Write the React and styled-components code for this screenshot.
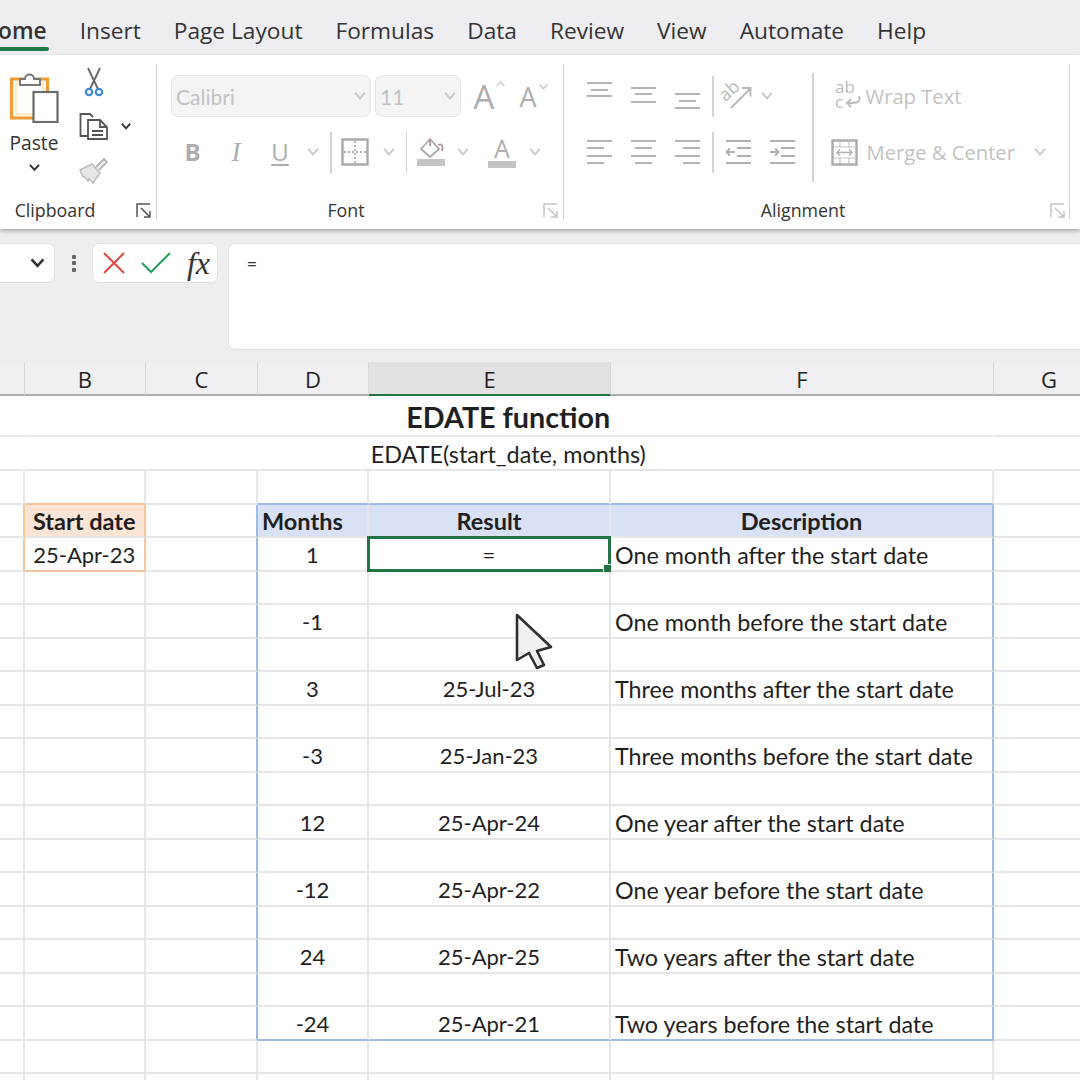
import styled, { createGlobalStyle } from "styled-components";

const Global = createGlobalStyle`
  html, body {
    margin: 0;
    padding: 0;
    background: #fff;
  }
  * {
    box-sizing: border-box;
  }
`;

const UI_FONT = `"Open Sans", "Noto Sans", "Liberation Sans", sans-serif`;
const CELL_FONT = `Lato, "Liberation Sans", sans-serif`;
const DISABLED = "#c2c2c2";
const ICON_GREY = "#adadad";
const COLS = "24.5px 121.5px 112px 111px 242px 383px 111px";
const BLUE = "#9dbaea";
const ORANGE = "#f8c59b";
const GRID = "#e6e6e9";
const TEXT_SIZE = 23.3;
const BOLD_SIZE = 23.5;

const Page = styled.div`
  width: 1080px;
  height: 1080px;
  overflow: hidden;
  position: relative;
  font-family: ${UI_FONT};
  background: #fff;
`;

const TabBar = styled.div`
  height: 55px;
  background: #eeeef2;
  display: flex;
  align-items: flex-start;
  gap: 33px;
  margin-left: -19px;
  padding-top: 14px;
`;

const Tab = styled.div`
  position: relative;
  font-size: 22.7px;
  line-height: 33px;
  color: #333;
  font-weight: ${({ $active }) => ($active ? 600 : 400)};
  white-space: nowrap;

  &::after {
    content: "";
    display: ${({ $active }) => ($active ? "block" : "none")};
    position: absolute;
    left: 0;
    right: -2px;
    bottom: -4px;
    height: 4px;
    border-radius: 2px;
    background: #1f7a45;
  }
`;

const Ribbon = styled.div`
  height: 174px;
  background: #fff;
  display: flex;
  box-shadow: 0 2px 4px rgba(0, 0, 0, 0.3);
  position: relative;
`;

const Group = styled.div`
  width: ${({ $w }) => $w}px;
  height: 155px;
  margin-top: 9px;
  border-right: 1.5px solid #d0d0d0;
  display: flex;
  flex-direction: column;
  padding-left: ${({ $pad }) => $pad || 0}px;
`;

const Footer = styled.div`
  margin-top: auto;
  height: 21px;
  display: grid;
  grid-template-columns: ${({ $cols }) => $cols};
  column-gap: ${({ $gap }) => $gap}px;
  align-items: center;
  font-size: 17.8px;
  color: #333;
  white-space: nowrap;
`;

const FooterLabel = styled.span`
  justify-self: center;
`;

const ClipboardBody = styled.div`
  display: flex;
  margin-top: -4px;
`;

const PasteButton = styled.div`
  width: 68px;
  display: flex;
  flex-direction: column;
  align-items: center;
  padding-top: 9px;
  font-size: 19.2px;
  color: #333;
  gap: 9px;
`;

const PasteText = styled.span`
  line-height: 22px;
`;

const SmallColumn = styled.div`
  display: flex;
  flex-direction: column;
`;

const Row = styled.div`
  display: flex;
  align-items: center;
  height: ${({ $h }) => $h || 42}px;
  margin-top: ${({ $mt }) => $mt || 0}px;
`;

const Slot = styled.div`
  width: ${({ $w }) => $w}px;
  display: flex;
  align-items: center;
  justify-content: center;
  flex-shrink: 0;
`;

const Select = styled.div`
  width: ${({ $w }) => $w}px;
  height: 42px;
  margin-right: 4px;
  background: #f4f4f4;
  border: 1.5px solid #e6e6e6;
  border-radius: 7px;
  display: flex;
  align-items: center;
  justify-content: space-between;
  padding: 0 3px 0 4px;
  font-family: ${CELL_FONT};
  font-size: 21px;
  color: ${DISABLED};
`;

const Bar = styled.div`
  width: 1.5px;
  height: ${({ $h }) => $h || 41}px;
  background: #d4d4d4;
  margin: 0 ${({ $m }) => $m || 0}px;
  flex-shrink: 0;
`;

const Glyph = styled.span`
  font-family: ${({ $serif }) => ($serif ? `"Liberation Serif", serif` : UI_FONT)};
  font-size: ${({ $size }) => $size}px;
  font-weight: ${({ $weight }) => $weight || 400};
  font-style: ${({ $italic }) => ($italic ? "italic" : "normal")};
  text-decoration: ${({ $under }) => ($under ? "underline" : "none")};
  text-underline-offset: 3px;
  color: ${({ $color }) => $color || ICON_GREY};
  line-height: 1;
`;

const ColorLetter = styled.span`
  display: flex;
  flex-direction: column;
  align-items: center;
  font-size: 25px;
  line-height: 22px;
  color: ${ICON_GREY};
`;

const Swatch = styled.span`
  display: block;
  width: 28px;
  height: 7px;
  margin-top: 2px;
  background: #c4c4c4;
`;

const SizeA = styled.div`
  display: flex;
  align-items: flex-start;
  gap: 1px;
`;

const AlignBody = styled.div`
  display: flex;
  height: 100%;
`;

const AlignLeft = styled.div`
  width: 248px;
  padding-top: 11px;
`;

const AlignRight = styled.div`
  padding: 11px 0 0 17px;
  flex: 1;
`;

const TallBar = styled.div`
  width: 1.5px;
  height: 109px;
  margin-top: 9px;
  background: #d4d4d4;
`;

const WrapRow = styled(Row)`
  gap: 9px;
  font-size: 20.2px;
  color: ${DISABLED};
  white-space: nowrap;
`;

const FormulaArea = styled.div`
  height: 133px;
  background: #eeeef1;
  display: flex;
  align-items: flex-start;
  padding-top: 14px;
`;

const NameBox = styled.div`
  width: 55px;
  height: 40px;
  background: #fff;
  border-radius: 0 7px 7px 0;
  border: 1px solid #e2e2e4;
  border-left: 0;
  display: flex;
  align-items: center;
  justify-content: flex-end;
  padding-right: 8px;
`;

const Dots = styled.div`
  width: 37px;
  height: 40px;
  display: flex;
  flex-direction: column;
  align-items: center;
  justify-content: center;
  gap: 2.5px;
`;

const Dot = styled.span`
  width: 4px;
  height: 4px;
  border-radius: 1px;
  background: #666;
`;

const FormulaButtons = styled.div`
  width: 126px;
  height: 40px;
  background: #fff;
  border: 1px solid #e2e2e4;
  border-radius: 7px;
  display: flex;
  align-items: center;
  justify-content: space-between;
  padding: 0 7px 0 9px;
`;

const FxText = styled.span`
  font-family: "Liberation Serif", serif;
  font-style: italic;
  font-size: 32px;
  line-height: 1;
  color: #333;
`;

const FormulaInput = styled.div`
  margin-left: 10px;
  flex: 1;
  height: 107px;
  background: #fff;
  border: 1px solid #e2e2e4;
  border-right: 0;
  border-radius: 7px 0 0 7px;
  padding: 7px 0 0 18px;
  font-size: 17px;
  line-height: 26px;
  color: #333;
`;

const ColumnHeader = styled.div`
  display: grid;
  grid-template-columns: ${COLS};
  height: 34px;
  background: #f0f0f2;
`;

const HeaderCell = styled.div`
  display: flex;
  align-items: center;
  justify-content: center;
  padding-top: 1px;
  font-family: ${UI_FONT};
  font-size: 22px;
  color: #222;
  background: ${({ $selected }) => ($selected ? "#e1e1e1" : "transparent")};
  border-right: 1.5px solid #d6d6d8;
  border-bottom: ${({ $selected }) =>
    $selected ? "2.5px solid #217346" : "2px solid #aeaeae"};
`;

const SheetRow = styled.div`
  display: grid;
  grid-template-columns: ${COLS};
  height: ${({ $h }) => $h}px;
`;

const Cell = styled.div`
  position: relative;
  grid-column: ${({ $span }) => $span || "auto"};
  display: flex;
  align-items: center;
  justify-content: ${({ $left }) => ($left ? "flex-start" : "center")};
  padding: 2px 0 0 ${({ $left }) => ($left ? "4px" : 0)};
  font-family: ${CELL_FONT};
  font-size: ${({ $size }) => $size || 22}px;
  font-weight: ${({ $bold }) => ($bold ? 700 : 400)};
  color: #1f1f1f;
  white-space: nowrap;
  background: ${({ $fill }) => $fill || "#fff"};
  border-right: 2px solid ${({ $r }) => $r || GRID};
  border-bottom: 2px solid ${({ $b }) => $b || GRID};
`;

const SelectedFrame = styled.div`
  position: absolute;
  left: -2px;
  top: -2px;
  right: -2px;
  bottom: -2px;
  border: 3px solid #217346;

  &::after {
    content: "";
    position: absolute;
    right: -4px;
    bottom: -4px;
    width: 7px;
    height: 7px;
    background: #217346;
    border: 1px solid #fff;
  }
`;

const Cursor = styled.svg`
  position: absolute;
  left: 514px;
  top: 612px;
`;

const Chevron = ({ dark, size = 14, up }) => (
  <svg width={size} height={size * 0.7} viewBox="0 0 14 10" fill="none">
    <polyline
      points={up ? "2,8 7,2.5 12,8" : "2,2 7,7.5 12,2"}
      stroke={dark ? "#333" : "#c6c6c6"}
      strokeWidth={dark ? 2.2 : 1.8}
    />
  </svg>
);

const Launcher = ({ color }) => (
  <svg width="15" height="15" viewBox="0 0 15 15" fill="none" stroke={color} strokeWidth="1.5">
    <path d="M1 14V1H14" />
    <path d="M5 5L14 14M14 8V14H8" />
  </svg>
);

const PasteIcon = () => (
  <svg width="50" height="54" viewBox="0 0 50 54" fill="none">
    <rect x="2.5" y="10" width="36" height="39" fill="#fff7e4" stroke="#f09a36" strokeWidth="3" />
    <rect x="7" y="15" width="27" height="30" fill="#fff" stroke="#f7d99b" strokeWidth="1" />
    <path d="M11 16v-6h5c0-6 9-6 9 0h6v6z" fill="#fff" stroke="#777" strokeWidth="2" />
    <rect x="24.5" y="23" width="24" height="30" fill="#fff" stroke="#6b6b6b" strokeWidth="2.2" />
  </svg>
);

const CutIcon = () => (
  <svg width="20" height="30" viewBox="0 0 20 30" fill="none">
    <path d="M4 1L14 22M16 1L6 22" stroke="#666" strokeWidth="1.8" />
    <circle cx="5" cy="25" r="3.2" stroke="#3b8ad6" strokeWidth="2.2" />
    <circle cx="15" cy="25" r="3.2" stroke="#3b8ad6" strokeWidth="2.2" />
  </svg>
);

const CopyIcon = () => (
  <svg width="30" height="29" viewBox="0 0 30 29" fill="none" stroke="#555" strokeWidth="1.8">
    <path d="M9 24H1.5V2H11l3 3" />
    <path d="M9 8H21l7 7V27H9z" fill="#fff" />
    <path d="M21 8v7h7" />
    <path d="M13 19H24M13 23H24" />
  </svg>
);

const PainterIcon = () => (
  <svg width="30" height="28" viewBox="0 0 30 28" fill="none">
    <path d="M1 14L13 8L21 17L14 27L10 23L9 25L6 21L4 21z" fill="#e6e6e6" stroke="#bcbcbc" strokeWidth="1.5" />
    <path d="M17 11L25 3L28 6L20 14" fill="#eee" stroke="#b4b4b4" strokeWidth="1.8" />
  </svg>
);

const BorderIcon = () => (
  <svg width="28" height="28" viewBox="0 0 28 28" fill="none">
    <rect x="1.5" y="1.5" width="25" height="25" stroke="#a8a8a8" strokeWidth="2.4" />
    <path d="M14 3V25M3 14H25" stroke="#999" strokeWidth="1.4" strokeDasharray="2 2" />
  </svg>
);

const FillIcon = () => (
  <svg width="30" height="30" viewBox="0 0 30 30" fill="none">
    <path d="M5 12L14 2L23 12L14 20z" stroke="#aaa" strokeWidth="1.8" />
    <path d="M14 2V9M22 8C27 6 27 10 26 14" stroke="#b09a9a" strokeWidth="1.8" />
    <rect x="1" y="22" width="28" height="7" fill="#c4c4c4" />
  </svg>
);

const AlignLines = ({ lines }) => (
  <svg width="26" height="30" viewBox="0 0 26 30" stroke="#b0b0b0" strokeWidth="1.9">
    {lines.map(([x1, x2, y]) => (
      <line key={y} x1={x1} x2={x2} y1={y} y2={y} />
    ))}
  </svg>
);

const IndentIcon = ({ right }) => (
  <svg width="26" height="30" viewBox="0 0 26 30" stroke="#b0b0b0" strokeWidth="1.9" fill="none">
    <path d="M1 4H26M12 11H26M12 19H26M1 26H26" />
    {right ? <path d="M1 15H9M6 11.5L9.5 15L6 18.5" /> : <path d="M10 15H2M5 11.5L1.5 15L5 18.5" />}
  </svg>
);

const OrientIcon = () => (
  <svg width="30" height="28" viewBox="0 0 30 28" fill="none" stroke="#b8b8b8" strokeWidth="1.8" overflow="visible">
    <text
      x="-1"
      y="15"
      fontSize="18"
      fontFamily="Open Sans, sans-serif"
      fill="#b8b8b8"
      stroke="none"
      transform="rotate(-42 8 12)"
    >
      ab
    </text>
    <path d="M9 26L28 7M20 6H28.5V14.5" />
  </svg>
);

const WrapIcon = () => (
  <svg width="26" height="30" viewBox="-4 0 26 30" fill="none" stroke="#bbb" strokeWidth="1.8" overflow="visible">
    <text x="0" y="12" fontSize="17" fontFamily="Open Sans, sans-serif" fill="#bbb" stroke="none">
      ab
    </text>
    <text x="0" y="27" fontSize="17" fontFamily="Open Sans, sans-serif" fill="#bbb" stroke="none">
      c
    </text>
    <path d="M24 15C26 22 22 22 12 22M16 18L12 22L16 26" />
  </svg>
);

const MergeIcon = () => (
  <svg width="27" height="27" viewBox="0 0 27 27" fill="none">
    <rect x="1.5" y="1.5" width="24" height="24" stroke="#ababab" strokeWidth="2.4" />
    <rect x="3" y="8" width="21" height="11" fill="#fff" />
    <path d="M3 8H24M3 19H24M9 2V8M18 2V8M9 19V25M18 19V25" stroke="#c4c4c4" strokeWidth="1.2" />
    <path d="M6 13.5H21M9 10.5L6 13.5L9 16.5M18 10.5L21 13.5L18 16.5" stroke="#b0b0b0" strokeWidth="1.4" />
  </svg>
);

const CrossIcon = () => (
  <svg width="24" height="24" viewBox="0 0 24 24" stroke="#e8453c" strokeWidth="2">
    <path d="M2 2L22 22M22 2L2 22" />
  </svg>
);

const CheckIcon = () => (
  <svg width="30" height="22" viewBox="0 0 30 22" fill="none" stroke="#21a05a" strokeWidth="2">
    <path d="M1 11L10 20L29 1" />
  </svg>
);

const ALIGN_TOP = [
  [[0, 25, 2], [4, 21, 9], [0, 25, 15]],
  [[0, 25, 7], [4, 21, 13], [0, 25, 21]],
  [[0, 25, 13], [4, 21, 20], [0, 25, 27]],
];

const ALIGN_BOTTOM = [
  [[0, 25, 4], [0, 17, 11], [0, 25, 19], [0, 17, 26]],
  [[0, 25, 4], [4, 21, 11], [0, 25, 19], [4, 21, 26]],
  [[0, 25, 4], [8, 25, 11], [0, 25, 19], [8, 25, 26]],
];

const COLUMNS = ["", "B", "C", "D", "E", "F", "G"];

const TABLE = [
  [1, "=", "One month after the start date"],
  [-1, "", "One month before the start date"],
  [3, "25-Jul-23", "Three months after the start date"],
  [-3, "25-Jan-23", "Three months before the start date"],
  [12, "25-Apr-24", "One year after the start date"],
  [-12, "25-Apr-22", "One year before the start date"],
  [24, "25-Apr-25", "Two years after the start date"],
  [-24, "25-Apr-21", "Two years before the start date"],
];

const HEADER_FILL = "#d9e1f4";

function Blank() {
  return (
    <SheetRow $h={33.5}>
      <Cell />
      <Cell />
      <Cell />
      <Cell />
      <Cell />
      <Cell />
      <Cell />
    </SheetRow>
  );
}

function TableGap() {
  return (
    <SheetRow $h={33.5}>
      <Cell />
      <Cell />
      <Cell $r={BLUE} />
      <Cell />
      <Cell />
      <Cell $r={BLUE} />
      <Cell />
    </SheetRow>
  );
}

function DataRow({ item, first, last }) {
  const [months, result, text] = item;
  return (
    <SheetRow $h={33.5}>
      <Cell $r={first ? ORANGE : undefined} />
      <Cell $b={first ? ORANGE : undefined} $r={first ? ORANGE : undefined}>
        {first ? "25-Apr-23" : ""}
      </Cell>
      <Cell $r={BLUE} />
      <Cell $b={last ? BLUE : undefined}>{months}</Cell>
      <Cell $b={last ? BLUE : undefined}>
        {result}
        {first && <SelectedFrame />}
      </Cell>
      <Cell $left $size={TEXT_SIZE} $r={BLUE} $b={last ? BLUE : undefined}>
        {text}
      </Cell>
      <Cell />
    </SheetRow>
  );
}

export default function App() {
  return (
    <Page>
      <Global />
      <TabBar>
        <Tab $active>Home</Tab>
        <Tab>Insert</Tab>
        <Tab>Page Layout</Tab>
        <Tab>Formulas</Tab>
        <Tab>Data</Tab>
        <Tab>Review</Tab>
        <Tab>View</Tab>
        <Tab>Automate</Tab>
        <Tab>Help</Tab>
      </TabBar>

      <Ribbon>
        <Group $w={157}>
          <ClipboardBody>
            <PasteButton>
              <PasteIcon />
              <PasteText>Paste</PasteText>
              <Chevron dark size={13} />
            </PasteButton>
            <SmallColumn>
              <Row $h={44}>
                <Slot $w={52}>
                  <CutIcon />
                </Slot>
              </Row>
              <Row $h={44}>
                <Slot $w={52}>
                  <CopyIcon />
                </Slot>
                <Chevron dark size={12} />
              </Row>
              <Row $h={44}>
                <Slot $w={52}>
                  <PainterIcon />
                </Slot>
              </Row>
            </SmallColumn>
          </ClipboardBody>
          <Footer $cols="110px 15px" $gap={26}>
            <FooterLabel>Clipboard</FooterLabel>
            <Launcher color="#555" />
          </Footer>
        </Group>

        <Group $w={407} $pad={14}>
          <Row $mt={11}>
            <Select $w={200}>
              Calibri
              <Chevron />
            </Select>
            <Select $w={86}>
              11
              <Chevron />
            </Select>
            <Slot $w={50}>
              <SizeA>
                <Glyph $size={33}>A</Glyph>
                <Chevron up size={11} />
              </SizeA>
            </Slot>
            <Slot $w={38}>
              <SizeA>
                <Glyph $size={27}>A</Glyph>
                <Chevron size={11} />
              </SizeA>
            </Slot>
          </Row>
          <Row $mt={14}>
            <Slot $w={43}>
              <Glyph $size={24} $weight={700}>B</Glyph>
            </Slot>
            <Slot $w={44}>
              <Glyph $size={27} $serif $italic>I</Glyph>
            </Slot>
            <Slot $w={44}>
              <Glyph $size={24} $under>U</Glyph>
            </Slot>
            <Slot $w={22}>
              <Chevron />
            </Slot>
            <Slot $w={6} />
            <Bar />
            <Slot $w={47}>
              <BorderIcon />
            </Slot>
            <Slot $w={20}>
              <Chevron />
            </Slot>
            <Slot $w={7} />
            <Bar />
            <Slot $w={47}>
              <FillIcon />
            </Slot>
            <Slot $w={17}>
              <Chevron />
            </Slot>
            <Slot $w={8} />
            <Slot $w={46}>
              <ColorLetter>
                A
                <Swatch />
              </ColorLetter>
            </Slot>
            <Slot $w={20}>
              <Chevron />
            </Slot>
          </Row>
          <Footer $cols="350px 15px" $gap={22}>
            <FooterLabel>Font</FooterLabel>
            <Launcher color="#c4c4c4" />
          </Footer>
        </Group>

        <Group $w={506}>
          <AlignBody>
            <AlignLeft>
              <Row>
                <Slot $w={14} />
                {ALIGN_TOP.map((lines) => (
                  <Slot $w={44} key={lines[0][2]}>
                    <AlignLines lines={lines} />
                  </Slot>
                ))}
                <Bar $m={2} />
                <Slot $w={42}>
                  <OrientIcon />
                </Slot>
                <Slot $w={18}>
                  <Chevron />
                </Slot>
              </Row>
              <Row $mt={14}>
                <Slot $w={14} />
                {ALIGN_BOTTOM.map((lines) => (
                  <Slot $w={44} key={lines[1][1]}>
                    <AlignLines lines={lines} />
                  </Slot>
                ))}
                <Bar $m={2} />
                <Slot $w={44}>
                  <IndentIcon />
                </Slot>
                <Slot $w={44}>
                  <IndentIcon right />
                </Slot>
              </Row>
            </AlignLeft>
            <TallBar />
            <AlignRight>
              <WrapRow>
                <WrapIcon />
                Wrap Text
              </WrapRow>
              <WrapRow $mt={14}>
                <MergeIcon />
                Merge &amp; Center
                <Slot $w={32}>
                  <Chevron />
                </Slot>
              </WrapRow>
            </AlignRight>
          </AlignBody>
          <Footer $cols="478px 15px" $gap={8}>
            <FooterLabel>Alignment</FooterLabel>
            <Launcher color="#c4c4c4" />
          </Footer>
        </Group>
      </Ribbon>

      <FormulaArea>
        <NameBox>
          <Chevron dark size={17} />
        </NameBox>
        <Dots>
          <Dot />
          <Dot />
          <Dot />
        </Dots>
        <FormulaButtons>
          <CrossIcon />
          <CheckIcon />
          <FxText>fx</FxText>
        </FormulaButtons>
        <FormulaInput>=</FormulaInput>
      </FormulaArea>

      <ColumnHeader>
        {COLUMNS.map((c) => (
          <HeaderCell key={c} $selected={c === "E"}>
            {c}
          </HeaderCell>
        ))}
      </ColumnHeader>

      <SheetRow $h={41}>
        <Cell $r="#fff" />
        <Cell $span="2 / span 5" $size={28.7} $bold $r="#fff">
          EDATE function
        </Cell>
        <Cell $r="#fff" />
      </SheetRow>
      <SheetRow $h={34}>
        <Cell $r="#fff" />
        <Cell $span="2 / span 5" $size={23.4} $r="#fff">
          EDATE(start_date, months)
        </Cell>
        <Cell $r="#fff" />
      </SheetRow>
      <SheetRow $h={33.5}>
        <Cell />
        <Cell $b={ORANGE} />
        <Cell />
        <Cell $b={BLUE} />
        <Cell $b={BLUE} />
        <Cell $b={BLUE} />
        <Cell />
      </SheetRow>
      <SheetRow $h={33.5}>
        <Cell $r={ORANGE} />
        <Cell $bold $size={BOLD_SIZE} $fill="#fce4d6" $r={ORANGE}>
          Start date
        </Cell>
        <Cell $r={BLUE} />
        <Cell $bold $left $size={BOLD_SIZE} $fill={HEADER_FILL}>Months</Cell>
        <Cell $bold $size={BOLD_SIZE} $fill={HEADER_FILL}>Result</Cell>
        <Cell $bold $size={BOLD_SIZE} $fill={HEADER_FILL} $r={BLUE}>Description</Cell>
        <Cell />
      </SheetRow>
      {TABLE.map((item, i) => (
        <div key={item[2]}>
          <DataRow item={item} first={i === 0} last={i === TABLE.length - 1} />
          {i < TABLE.length - 1 && <TableGap />}
        </div>
      ))}
      <Blank />
      <Blank />

      <Cursor width="42" height="60" viewBox="0 0 42 60">
        <path
          d="M3 3L37 35L23 39L30 53L23 56L15 41L3 48z"
          fill="#f1f1f1"
          stroke="#2f2f2f"
          strokeWidth="2.6"
          strokeLinejoin="round"
        />
      </Cursor>
    </Page>
  );
}
